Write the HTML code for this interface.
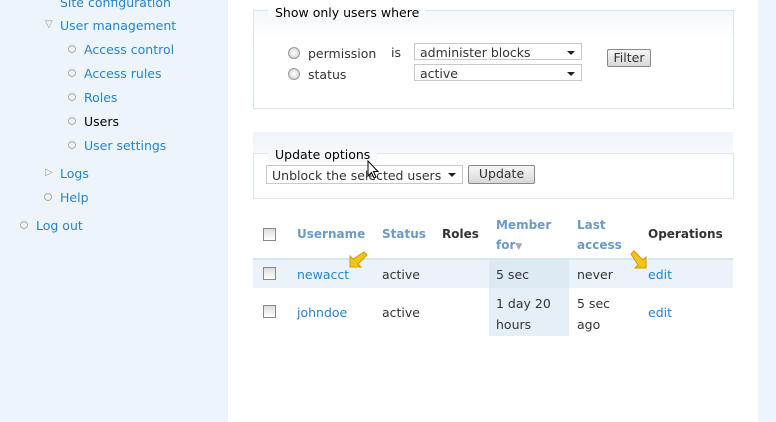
<!DOCTYPE html>
<html><head><style>
body{margin:0;width:776px;height:422px;overflow:hidden;background:#fff;font-family:"DejaVu Sans",Verdana,sans-serif;font-size:12.5px;color:#333;position:relative}
.a{position:absolute;white-space:nowrap}
.t{margin-top:1px}
a,.l{color:#2783cc;text-decoration:none}
.side{position:absolute;left:0;top:0;width:228px;height:422px;background:#edf5fb}
.rs{position:absolute;left:758px;top:0;width:18px;height:422px;background:#edf5fb}
.b{position:absolute;width:6px;height:6px;border:1px solid #aaa;border-radius:50%}
.fs{position:absolute;border:1px solid #d6e6f2}
.sel{position:absolute;border:1px solid #c8c8c8;background:#fff;height:17px;line-height:16px;padding-left:5px;box-sizing:border-box}
.sel:after{content:"";position:absolute;right:6px;top:7px;border:4px solid transparent;border-top:4px solid #222}
.btn{position:absolute;border:1px solid #888;border-radius:2px;background:linear-gradient(#f6f6f6,#d8d8d8);text-align:center;box-sizing:border-box;line-height:15px}
.cb{position:absolute;width:11px;height:11px;border:1px solid #888;background:linear-gradient(#ddd,#fff)}
.rad{position:absolute;width:10px;height:10px;border:1px solid #999;border-radius:50%;background:radial-gradient(#fff,#ccc)}
.h{color:#6b9ac6;font-weight:bold;font-size:12px}
.hb{font-weight:bold;color:#333;font-size:12px}
</style></head><body>
<div class="side"></div><div class="rs"></div>
<div class="a l t" style="left:60px;top:-6px">Site configuration</div>
<div class="a t" style="left:45px;top:18px;color:#999;font-size:10px">▽</div>
<div class="a l t" style="left:60px;top:17px">User management</div>
<div class="b" style="left:68px;top:45px"></div><div class="a l t" style="left:84px;top:41px">Access control</div>
<div class="b" style="left:68px;top:69px"></div><div class="a l t" style="left:84px;top:65px">Access rules</div>
<div class="b" style="left:68px;top:93px"></div><div class="a l t" style="left:84px;top:89px">Roles</div>
<div class="b" style="left:68px;top:117px"></div><div class="a t" style="left:84px;top:113px;color:#000">Users</div>
<div class="b" style="left:68px;top:141px"></div><div class="a l t" style="left:84px;top:137px">User settings</div>
<div class="a t" style="left:45px;top:166px;color:#999;font-size:10px">▷</div><div class="a l t" style="left:60px;top:165px">Logs</div>
<div class="b" style="left:44px;top:193px"></div><div class="a l t" style="left:60px;top:189px">Help</div>
<div class="b" style="left:20px;top:221px"></div><div class="a l t" style="left:36px;top:217px">Log out</div>

<div class="fs" style="left:253px;top:10px;width:479px;height:97px;background:linear-gradient(#f3f8fc,#fff 30px)"></div>
<div class="a t" style="left:268px;top:4px;padding:0 7px;color:#000;background:linear-gradient(#fff,#f6f9fc)">Show only users where</div>
<div class="rad" style="left:288px;top:47px"></div><div class="a t" style="left:308px;top:45px">permission</div>
<div class="a t" style="left:391px;top:44px">is</div>
<div class="rad" style="left:288px;top:68px"></div><div class="a t" style="left:308px;top:66px">status</div>
<div class="sel" style="left:414px;top:43px;width:168px;line-height:18px">administer blocks</div>
<div class="sel" style="left:414px;top:64px;width:168px;line-height:18px">active</div>
<div class="btn" style="left:607px;top:49px;width:44px;height:18px">Filter</div>

<div class="a" style="left:253px;top:132px;width:480px;height:22px;background:linear-gradient(#eef4fa,#f6f9fc)"></div>
<div class="fs" style="left:253px;top:153px;width:479px;height:44px"></div>
<div class="a t" style="left:268px;top:146px;padding:0 7px;color:#000;background:#f6f9fc">Update options</div>
<div class="sel" style="left:266px;top:165px;width:197px;height:19px;line-height:19px">Unblock the selected users</div>
<div class="btn" style="left:468px;top:165px;width:67px;height:19px;line-height:16px">Update</div>
<svg class="a" style="left:367px;top:160px" width="12" height="20" viewBox="0 0 12 20"><path d="M1 1V16L4.5 12.5L7 18L9 17L6.5 11.5H11Z" fill="#fff" stroke="#000" stroke-width="1"/></svg>

<div class="a" style="left:253px;top:258px;width:480px;height:2px;background:#d3e7f4"></div>
<div class="a" style="left:253px;top:260px;width:480px;height:28px;background:#eaf3fa"></div>
<div class="a" style="left:489px;top:260px;width:80px;height:28px;background:#dde9f3"></div>
<div class="a" style="left:489px;top:288px;width:80px;height:48px;background:#e4eff7"></div>
<div class="cb" style="left:263px;top:228px"></div>
<div class="a h t" style="left:297px;top:226px">Username</div>
<div class="a h t" style="left:382px;top:226px">Status</div>
<div class="a hb t" style="left:442px;top:226px">Roles</div>
<div class="a h" style="left:496px;top:215px;line-height:20px">Member<br>for<span style="font-size:9px;color:#aaa">▼</span></div>
<div class="a h" style="left:577px;top:215px;line-height:20px">Last<br>access</div>
<div class="a hb t" style="left:648px;top:226px">Operations</div>
<div class="cb" style="left:263px;top:267px"></div>
<div class="a l t" style="left:297px;top:266px">newacct</div>
<div class="a t" style="left:382px;top:266px">active</div>
<div class="a t" style="left:496px;top:266px">5 sec</div>
<div class="a t" style="left:577px;top:266px">never</div>
<div class="a l t" style="left:648px;top:266px">edit</div>
<div class="cb" style="left:263px;top:305px"></div>
<div class="a l t" style="left:297px;top:304px">johndoe</div>
<div class="a t" style="left:382px;top:304px">active</div>
<div class="a" style="left:496px;top:293px;line-height:21px">1 day 20<br>hours</div>
<div class="a" style="left:577px;top:293px;line-height:21px">5 sec<br>ago</div>
<div class="a l t" style="left:648px;top:304px">edit</div>
<svg class="a" style="left:346px;top:250px" width="22" height="22" viewBox="0 0 22 22"><path d="M18 2L21 5L12 14L15 17H4V6L7 9Z" fill="#f2c418" stroke="#d19a00"/></svg>
<svg class="a" style="left:628px;top:250px" width="24" height="24" viewBox="0 0 24 24"><path d="M3 4L6 1L15 10L18 7V18H7L10 15Z" fill="#f2c418" stroke="#d19a00"/></svg>
</body></html>
